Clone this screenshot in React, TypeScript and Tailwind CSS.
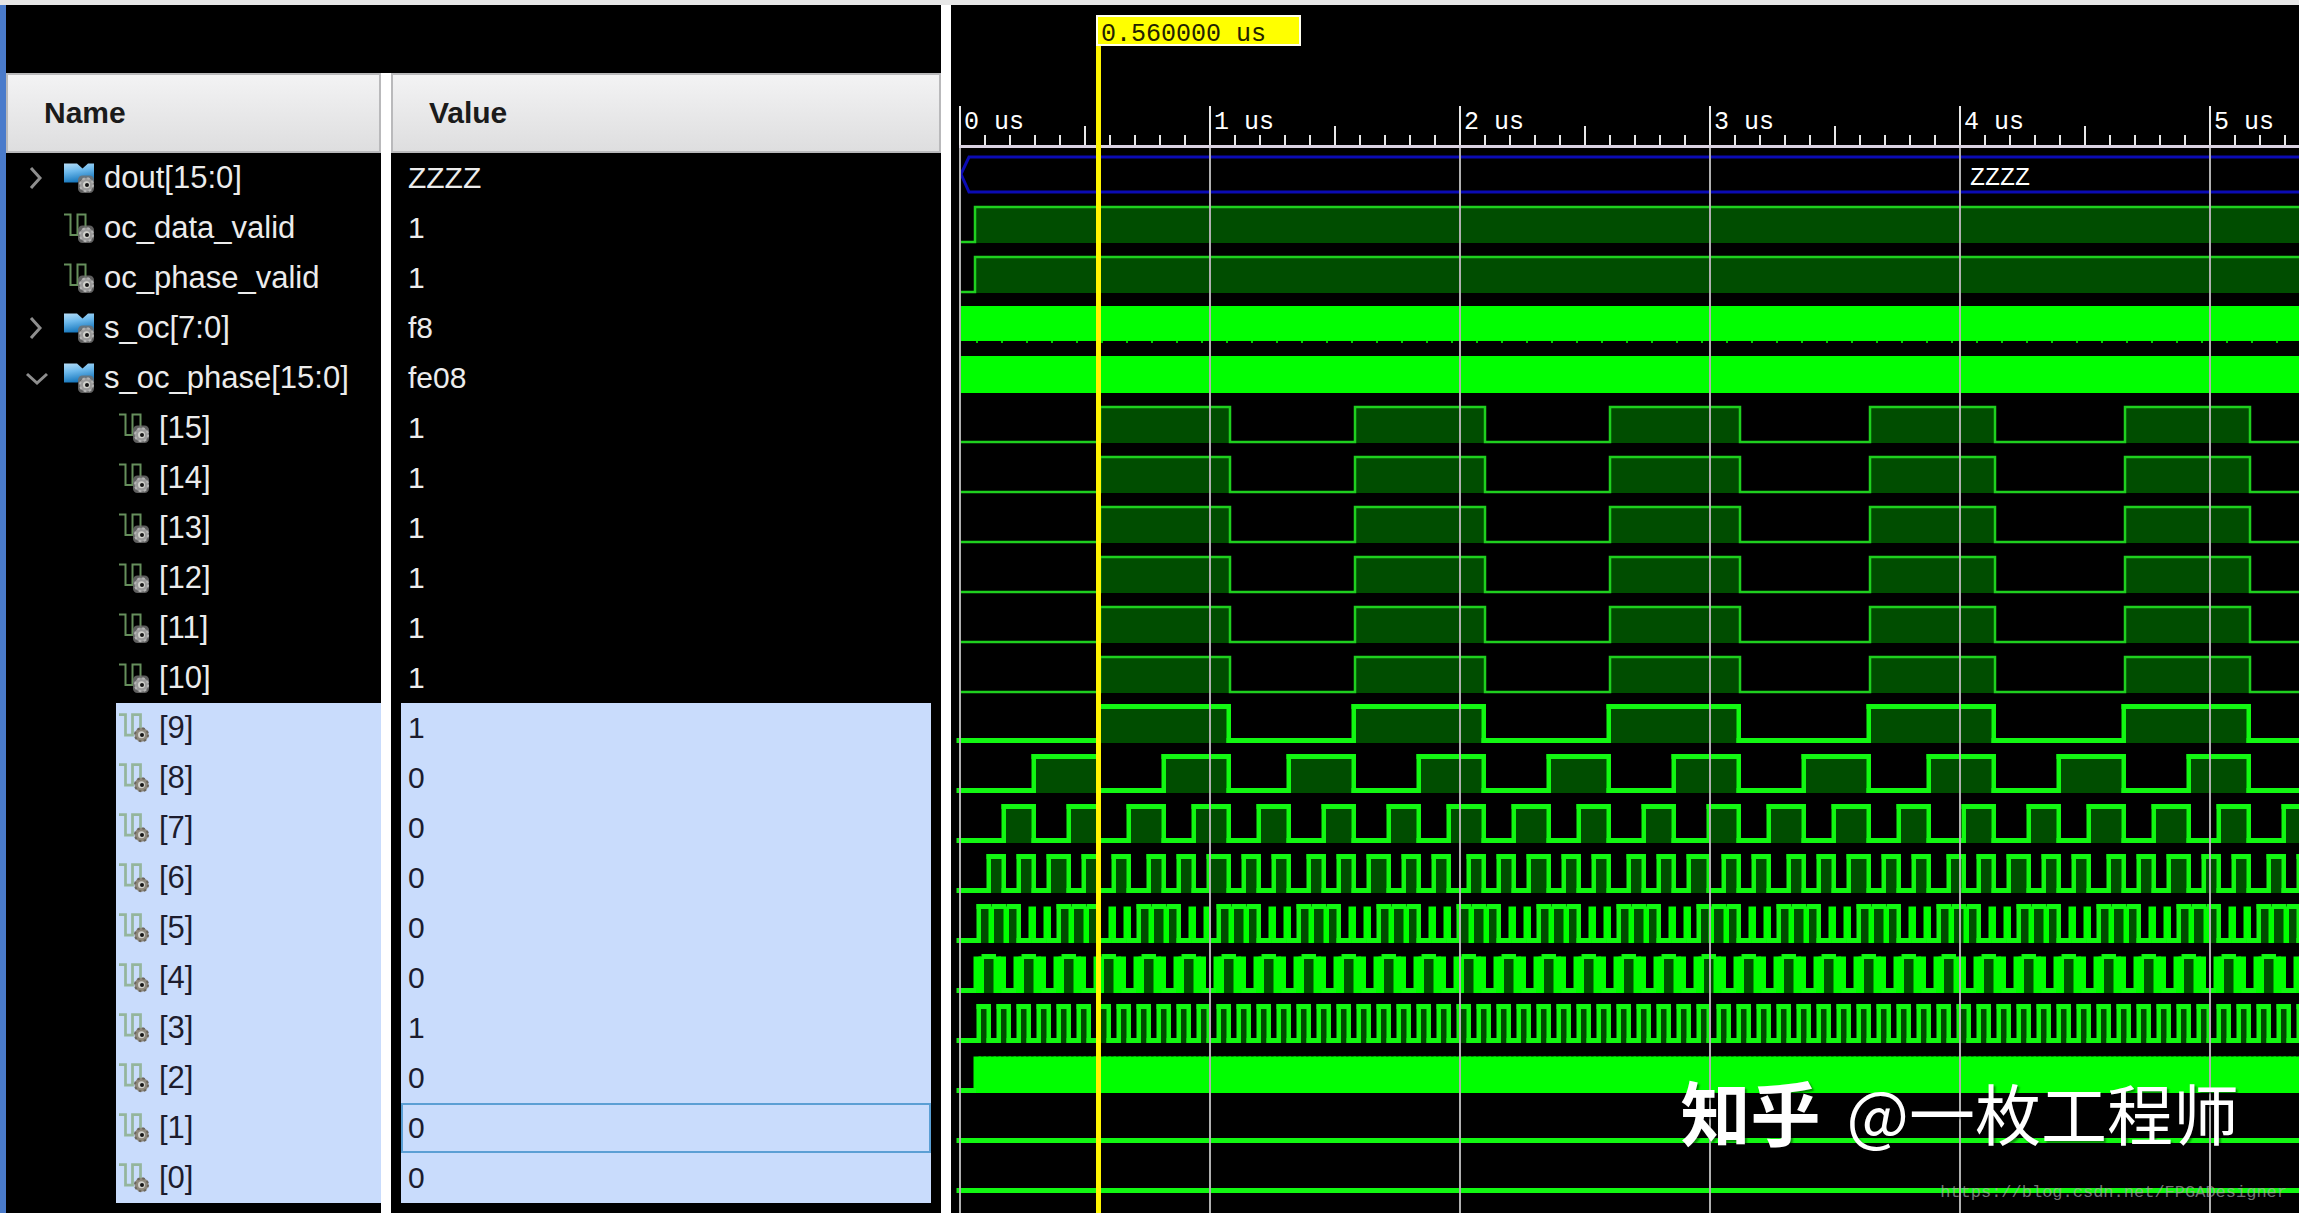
import React from "react";

/* ------------------------------------------------------------------ */
/* Signal model: one time unit is 20 ns, drawn 5 px wide.              */
/* ------------------------------------------------------------------ */

const UNIT = 5;
const UNITS = 640;
const MICROSECONDS = 6;
const PHASE_STEP = 20;
const PHASE_START = 2;

type Run = { from: number; to: number; high: boolean };

/** Level of one bit of the sign-extended 10-bit phase accumulator. */
function phaseBit(bit: number, n: number): boolean {
  if (n < PHASE_START) return false;
  const phase = (n - PHASE_START) * PHASE_STEP;
  return ((phase >> Math.min(bit, 9)) & 1) === 1;
}

function toRuns(level: (n: number) => boolean): Run[] {
  const runs: Run[] = [];
  for (let n = 0; n < UNITS; n++) {
    const high = level(n);
    const last = runs[runs.length - 1];
    if (last && last.high === high) last.to = n + 1;
    else runs.push({ from: n, to: n + 1, high });
  }
  return runs;
}

type Wave = "bus-z" | "bus-busy" | "bus-solid" | "valid" | "thin" | "thick";

type Signal = {
  name: string;
  value: string;
  kind: "bus" | "scalar";
  wave: Wave;
  bit?: number;
  open?: boolean;
  child?: boolean;
  selected?: boolean;
  focused?: boolean;
};

const PHASE_BITS = "1111111000001000";

const SIGNALS: Signal[] = [
  { name: "dout[15:0]", value: "ZZZZ", kind: "bus", wave: "bus-z", open: false },
  { name: "oc_data_valid", value: "1", kind: "scalar", wave: "valid" },
  { name: "oc_phase_valid", value: "1", kind: "scalar", wave: "valid" },
  { name: "s_oc[7:0]", value: "f8", kind: "bus", wave: "bus-busy", open: false },
  { name: "s_oc_phase[15:0]", value: "fe08", kind: "bus", wave: "bus-solid", open: true },
  ...PHASE_BITS.split("").map((value, i): Signal => {
    const bit = 15 - i;
    return {
      name: `[${bit}]`,
      value,
      kind: "scalar",
      wave: bit > 9 ? "thin" : "thick",
      bit,
      child: true,
      selected: bit <= 9,
      focused: bit === 1,
    };
  }),
];

/* ------------------------------------------------------------------ */
/* Icons                                                               */
/* ------------------------------------------------------------------ */

function Gear({ light }: { light?: boolean }) {
  return (
    <g>
      {!light && <rect x="5.6" y="5" width="6.4" height="7" rx="1.8" fill="#707070" opacity="0.85" />}
      <circle cx="9" cy="8.7" r="2.8" fill={light ? "#8f897d" : "#9a9a9a"} />
      <circle
        cx="9"
        cy="8.7"
        r="2.6"
        fill="none"
        stroke={light ? "#6b665c" : "#b4b4b4"}
        strokeWidth="0.8"
        strokeDasharray="1.02 1.02"
      />
      <circle cx="9" cy="8.7" r="1.4" fill="#d2d2cd" />
      <circle cx="9.2" cy="8.8" r="0.8" fill="#151515" />
    </g>
  );
}

function BusIcon() {
  return (
    <svg viewBox="0 0 12 12" className="size-[30px] shrink-0" aria-hidden="true">
      <defs>
        <linearGradient id="bus-fill" x1="0" y1="0" x2="0.25" y2="1">
          <stop offset="0" stopColor="#b4dcf6" />
          <stop offset="0.45" stopColor="#6db9ec" />
          <stop offset="1" stopColor="#1878bd" />
        </linearGradient>
      </defs>
      <path d="M0 0.2H5.2L7.4 2.2L9.6 0.2H12V7.4H9.4L7.4 6L5.4 7.8H0Z" fill="url(#bus-fill)" />
      <Gear />
    </svg>
  );
}

function ScalarIcon({ light }: { light?: boolean }) {
  return (
    <svg viewBox="0 0 12 12" className="size-[30px] shrink-0" aria-hidden="true">
      <path
        d="M0 0.6H2.6V8.8H5.4V0.6H8.6V6"
        fill="none"
        stroke={light ? "#94b59c" : "#668f5c"}
        strokeWidth={light ? 1.1 : 0.8}
      />
      <Gear light={light} />
    </svg>
  );
}

function Chevron({ open }: { open: boolean }) {
  return (
    <svg viewBox="0 0 24 24" className="size-6" fill="none" stroke="#8e8e8e" strokeWidth="3" aria-hidden="true">
      {open ? <path d="M3 8L13 17L23 8" /> : <path d="M7 2L16 12L7 22" />}
    </svg>
  );
}

/* ------------------------------------------------------------------ */
/* Waveforms                                                           */
/* ------------------------------------------------------------------ */

function ThinWave({ level }: { level: (n: number) => boolean }) {
  const x0 = 9;
  const runs = toRuns(level);
  const d = runs
    .map((r, i) => {
      const y = r.high ? 4 : 39;
      return `${i === 0 ? "M" : "L"}${x0 + r.from * UNIT} ${y}H${x0 + r.to * UNIT}`;
    })
    .join("");
  return (
    <>
      {runs
        .filter((r) => r.high)
        .map((r) => (
          <rect key={r.from} x={x0 + r.from * UNIT} y="4" width={(r.to - r.from) * UNIT} height="36" fill="#004d00" />
        ))}
      <path d={d} fill="none" stroke="#1fd01f" strokeWidth="2.5" />
    </>
  );
}

/** Selected traces: 5 px strokes; single-unit pulses collapse to solid bars. */
function ThickWave({ bit }: { bit: number }) {
  const x0 = 8;
  const runs = toRuns((n) => phaseBit(bit, n));
  return (
    <>
      {runs.map((r, i) => {
        const x = x0 + r.from * UNIT;
        const width = (r.to - r.from) * UNIT;
        if (r.to - r.from === 1) {
          return <rect key={r.from} x={x - 0.5} y="3.5" width="7.5" height="36.5" fill="#00ff00" />;
        }
        const previous = runs[i - 1];
        const edge = previous && previous.to - previous.from > 1;
        return (
          <g key={r.from}>
            {r.high && <rect x={x} y="4" width={width} height="36" fill="#004d00" />}
            {edge && <rect x={x - 2.5} y="1" width="4.5" height="39" fill="#12f812" />}
          </g>
        );
      })}
      {runs
        .filter((r) => r.to - r.from > 1)
        .map((r) => (
          <rect
            key={r.from}
            x={x0 + r.from * UNIT - 2.5}
            y={r.high ? 1 : 35}
            width={(r.to - r.from) * UNIT + 4.5}
            height="5"
            fill="#12f812"
          />
        ))}
    </>
  );
}

function WaveRow({ signal }: { signal: Signal }) {
  return (
    <div className="relative h-[50px] overflow-hidden">
      <svg className="h-[50px] w-full" role="img" aria-label={`${signal.name} waveform`}>
        {signal.wave === "bus-z" && (
          <path d="M4000 4H18L10 21L18 39H4000" fill="none" stroke="#0b0bb4" strokeWidth="3" />
        )}
        {signal.wave === "bus-busy" && (
          <>
            <rect x="10" y="3" width="100%" height="35" fill="#00ff00" />
            {Array.from({ length: 130 }, (_, k) => (
              <rect key={k} x={25 + k * 25} y="38" width="2" height="2" fill="#00c800" />
            ))}
          </>
        )}
        {signal.wave === "bus-solid" && <rect x="10" y="3" width="100%" height="37" fill="#00ff00" />}
        {signal.wave === "valid" && <ThinWave level={(n) => n >= 3} />}
        {signal.wave === "thin" && <ThinWave level={(n) => phaseBit(signal.bit ?? 0, n)} />}
        {signal.wave === "thick" && <ThickWave bit={signal.bit ?? 0} />}
      </svg>
      {signal.wave === "bus-z" && (
        <span className="absolute left-[1019px] top-[10px] font-['Liberation_Mono',monospace] text-[25px] leading-8 text-white">
          ZZZZ
        </span>
      )}
    </div>
  );
}

function Ruler() {
  return (
    <div className="flex h-[143px] flex-col justify-end overflow-hidden pl-2">
      <div className="flex">
        {Array.from({ length: MICROSECONDS }, (_, us) => (
          <div key={us} className="relative h-[39px] w-[250px] shrink-0">
            <span className="block pl-[5px] pt-[3px] font-['Liberation_Mono',monospace] text-[25px] leading-7 text-white">
              {us} us
            </span>
            <svg className="absolute inset-0 h-[39px] w-[250px]" aria-hidden="true">
              <rect x="0" y="0" width="2" height="39" fill="#e8e8e8" />
              {[1, 2, 3, 4, 5, 6, 7, 8, 9].map((t) => (
                <rect key={t} x={t * 25} y={t === 5 ? 20 : 29} width="2" height={t === 5 ? 19 : 10} fill="#e8e8e8" />
              ))}
            </svg>
          </div>
        ))}
      </div>
      <div className="h-[3px] bg-[#dad2e2]" />
    </div>
  );
}

function WavePane() {
  return (
    <section className="relative min-w-0 overflow-hidden bg-black" aria-label="Waveforms">
      <Ruler />
      <div className="pt-[5px]">
        {SIGNALS.map((s) => (
          <WaveRow key={s.name} signal={s} />
        ))}
      </div>

      <svg className="pointer-events-none absolute inset-x-0 bottom-0 top-[143px] h-[calc(100%-143px)] w-full" aria-hidden="true">
        {Array.from({ length: MICROSECONDS }, (_, us) => (
          <rect key={us} x={8 + us * 250} y="0" width="2" height="100%" fill="#b0b0b0" />
        ))}
      </svg>

      <div className="absolute bottom-0 left-[145px] top-[10px]">
        <div className="h-full w-[5px] bg-[#fff500]" />
        <output className="absolute left-0 top-0 h-[31px] w-[205px] whitespace-nowrap border-2 border-[#fffff0] bg-[#ffff00] pl-[3px] pt-[2px] font-['Liberation_Mono',monospace] text-[25px] leading-8 text-[#222200]">
          0.560000 us
        </output>
      </div>

      <div className="absolute bottom-16 right-[60px] flex items-center gap-[26px] font-['Noto_Sans_CJK_SC',sans-serif] leading-[76px] text-white [text-shadow:2px_2px_2px_rgba(0,0,0,0.45)]">
        <span className="text-[70px] font-bold">知乎</span>
        <span className="text-[66px]">@一枚工程师</span>
      </div>
      <a
        href="https://blog.csdn.net/FPGADesigner"
        className="absolute bottom-2 right-3 font-['Liberation_Mono',monospace] text-[17px] leading-6 text-[#a8a8a8]/70"
      >
        https://blog.csdn.net/FPGADesigner
      </a>
    </section>
  );
}

/* ------------------------------------------------------------------ */
/* Signal table                                                        */
/* ------------------------------------------------------------------ */

const HEADER_CELL =
  "h-20 border-2 border-[#b9b9bb] bg-linear-to-b from-[#f3f3f4] to-[#dededf] p-0 text-left text-[30px] leading-9 font-bold text-[#1b1b1b]";

function SignalRow({ signal }: { signal: Signal }) {
  const { selected, child } = signal;
  return (
    <tr className="h-[50px]" aria-selected={!!selected}>
      <th scope="row" className="h-[50px] p-0 text-left font-normal">
        <div className={child ? "h-[50px] pl-[110px]" : "h-[50px] pl-[18px]"}>
          <div
            className={
              selected
                ? "flex h-[50px] items-center bg-[#c9dcfc] pl-[3px] text-[#1c1c2e]"
                : child
                  ? "flex h-[50px] items-center pl-[3px] text-[#ececec]"
                  : "flex h-[50px] items-center text-[#ececec]"
            }
          >
            {!child && (
              <span className="flex w-10 shrink-0">
                {signal.kind === "bus" && (
                  <button type="button" aria-expanded={signal.open} aria-label={`Toggle ${signal.name}`}>
                    <Chevron open={!!signal.open} />
                  </button>
                )}
              </span>
            )}
            {signal.kind === "bus" ? <BusIcon /> : <ScalarIcon light={selected} />}
            <span className="whitespace-nowrap pl-[10px] text-[31px] leading-9">{signal.name}</span>
          </div>
        </div>
      </th>
      <td className="bg-white p-0" />
      <td className="h-[50px] p-0">
        <div
          className={
            signal.focused
              ? "mx-[10px] flex h-[50px] items-center border-2 border-[#5b9fd4] bg-[#c9dcfc] pl-[5px] text-[#1c1c2e]"
              : selected
                ? "mx-[10px] flex h-[50px] items-center bg-[#c9dcfc] pl-[7px] text-[#1c1c2e]"
                : "mx-[10px] flex h-[50px] items-center pl-[7px] text-[#ececec]"
          }
        >
          <span className="text-[30px] leading-9">{signal.value}</span>
        </div>
      </td>
    </tr>
  );
}

function SignalPane() {
  return (
    <section className="flex min-w-0 flex-col bg-black pt-[68px]" aria-label="Signals">
      <table className="w-full table-fixed border-separate border-spacing-0">
        <colgroup>
          <col className="w-[40.1%]" />
          <col className="w-[10px]" />
          <col />
        </colgroup>
        <thead>
          <tr>
            <th scope="col" className={HEADER_CELL}>
              <span className="pl-[36px]">Name</span>
            </th>
            <td className="bg-white p-0" />
            <th scope="col" className={HEADER_CELL}>
              <span className="pl-[36px]">Value</span>
            </th>
          </tr>
        </thead>
        <tbody>
          {SIGNALS.map((s) => (
            <SignalRow key={s.name} signal={s} />
          ))}
        </tbody>
      </table>
      <div className="flex min-h-[10px] flex-1">
        <div className="w-[40.1%]" />
        <div className="w-[10px] bg-white" />
      </div>
    </section>
  );
}

export default function App() {
  return (
    <main className="flex min-h-screen flex-col bg-black font-['Liberation_Sans',Arial,sans-serif]">
      <div className="h-[5px] bg-[#e6e6e6]" />
      <div className="grid flex-1 grid-cols-[6px_minmax(0,935fr)_10px_minmax(0,1348fr)]">
        <div className="bg-[#4a7bcb]" />
        <SignalPane />
        <div className="bg-white" />
        <WavePane />
      </div>
    </main>
  );
}
